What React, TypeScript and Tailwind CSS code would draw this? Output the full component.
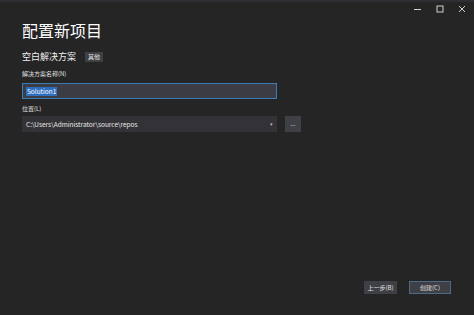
import React from "react";

export default function App() {
  const font = { fontFamily: '"Noto Sans CJK SC", "Noto Sans", sans-serif' };
  return (
    <div className="w-[474px] h-[315px] bg-[#252526] text-[#f1f1f1] flex flex-col overflow-hidden" style={font}>
      <div className="h-[2px] bg-[#2f2f33]" />
      <div className="flex justify-end items-center h-[14px] pr-[8px] gap-[14px] text-[#cfcfcf]">
        <svg width="8" height="8" viewBox="0 0 8 8"><path d="M0 4.5h7" stroke="#cfcfcf" strokeWidth="1" /></svg>
        <svg width="8" height="8" viewBox="0 0 8 8"><rect x="1" y="1" width="6" height="6" fill="none" stroke="#cfcfcf" strokeWidth="1" /></svg>
        <svg width="8" height="8" viewBox="0 0 8 8"><path d="M1 1l6 6M7 1L1 7" stroke="#cfcfcf" strokeWidth="1" /></svg>
      </div>
      <div className="flex-1 flex flex-col px-[22px]">
        <div className="text-[16px] leading-[20px] mt-[4px] text-white">配置新项目</div>
        <div className="flex items-center gap-[9px] mt-[10px]">
          <span className="text-[9px] leading-[14px]">空白解决方案</span>
          <span className="bg-[#3f3f46] text-[6px] leading-[8px] px-[3px] py-[1px] text-[#e0e0e0]">其他</span>
        </div>
        <div className="text-[6px] leading-[8px] mt-[6px] text-[#e0e0e0]">解决方案名称(N)</div>
        <div className="mt-[5px] w-[255px] h-[16px] border border-[#3a7cb8] bg-[#3c3c44] flex items-center px-[3px]">
          <span className="bg-[#2f6fbf] text-white text-[6.5px] leading-[9px] px-[1px]">Solution1</span>
        </div>
        <div className="text-[6px] leading-[8px] mt-[6px] text-[#e0e0e0]">位置(L)</div>
        <div className="mt-[3px] flex items-center gap-[8px]">
          <div className="w-[255px] h-[16px] bg-[#333337] flex items-center justify-between px-[4px]">
            <span className="text-[6.5px] leading-[9px] text-[#e8e8e8]">C:\Users\Administrator\source\repos</span>
            <span className="text-[5px] text-[#bdbdbd]">▾</span>
          </div>
          <div className="w-[16px] h-[16px] bg-[#3f3f46] flex items-center justify-center text-[6px] text-[#e0e0e0] leading-none">...</div>
        </div>
        <div className="flex-1" />
        <div className="flex justify-end gap-[12px] mb-[21px] pr-[1px]">
          <div className="w-[33px] h-[13px] bg-[#3f3f46] flex items-center justify-center text-[6px] text-[#e0e0e0]">上一步(B)</div>
          <div className="w-[42px] h-[13px] bg-[#3f3f46] border border-[#4b6a88] flex items-center justify-center text-[6px] text-[#e0e0e0]">创建(C)</div>
        </div>
      </div>
    </div>
  );
}
